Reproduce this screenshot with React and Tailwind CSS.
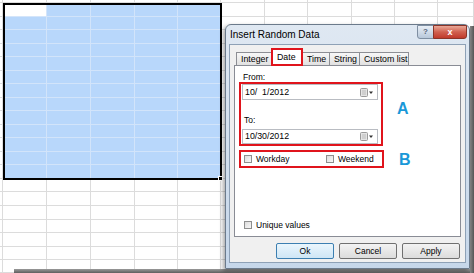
import React from 'react';

const colW = ['w-[3px]', 'w-[44px]', 'w-[44px]', 'w-[44px]', 'w-[43px]', 'w-[43px]', 'w-[44px]', 'w-[43px]', 'w-[44px]', 'w-[43px]', 'w-[43px]', 'w-[36px]'];
const rowH = ['h-[3px]', 'h-[14px]', 'h-[13px]', 'h-[14px]', 'h-[13px]', 'h-[14px]', 'h-[13px]', 'h-[14px]', 'h-[13px]', 'h-[14px]', 'h-[13px]', 'h-[14px]', 'h-[13px]', 'h-[14px]', 'h-[13px]', 'h-[14px]', 'h-[14px]', 'h-[13px]', 'h-[14px]', 'h-[13px]', 'h-[13px]'];

const cellClass = (r, c) => {
  const selected = r >= 1 && r <= 13 && c >= 1 && c <= 5;
  if (selected && r === 1 && c === 1) return 'bg-white border-[#d4e5fa]';
  if (selected) return 'bg-[#b8d7fb] border-[#d2e4fa]';
  return 'bg-white border-[#dcdcdc]';
};

const Sheet = () => (
  <div className="flex flex-col">
    {rowH.map((h, r) => (
      <div key={r} className={`flex ${h}`}>
        {colW.map((w, c) => (
          <div key={c} className={`${w} shrink-0 border-r border-b ${cellClass(r, c)}`} />
        ))}
      </div>
    ))}
  </div>
);

const CalendarPicker = () => (
  <svg width="13" height="9" viewBox="0 0 13 9" className="shrink-0">
    <rect x="0.5" y="0.5" width="7" height="8" rx="1" fill="#e4e4e4" stroke="#9a9a9a" />
    <rect x="2" y="2" width="4" height="5" fill="#cfcfcf" />
    <path d="M9 3.5h4l-2 2.5z" fill="#333" />
  </svg>
);

const DateInput = ({ value, h }) => (
  <div className={`flex ${h} items-center border border-[#b9bcc2] bg-white pl-[2px] pr-[4px]`}>
    <span className="flex-1 whitespace-pre text-[8.8px] leading-none text-black">{value}</span>
    <CalendarPicker />
  </div>
);

const Check = ({ label }) => (
  <div className="flex items-center gap-[4px]">
    <div className="h-[8px] w-[8px] border border-[#8e8f8f] bg-gradient-to-br from-[#dcdcdc] to-[#f8f8f8]" />
    <span className="text-[8.5px] leading-none text-black">{label}</span>
  </div>
);

const Tab = ({ label, w }) => (
  <div className={`${w} -ml-px flex h-[13px] items-center whitespace-nowrap border border-b-0 border-[#8c8e94] bg-gradient-to-b from-[#f7f7f7] to-[#e1e1e1] pl-[4px] text-[8.8px] leading-none text-black first:ml-0`}>
    {label}
  </div>
);

const Button = ({ label, primary }) => (
  <div
    className={`flex h-[16px] w-[58px] items-center justify-center rounded-[2px] border text-[8.5px] leading-none text-black ${
      primary
        ? 'border-[#3c7fb1] bg-gradient-to-b from-[#eaf6fd] to-[#cfe6f5]'
        : 'border-[#707070] bg-gradient-to-b from-[#f3f3f3] to-[#dcdcdc]'
    }`}
  >
    {label}
  </div>
);

export default function App() {
  return (
    <div className="relative h-[273px] w-[474px] overflow-hidden bg-white font-['Liberation_Sans',Arial,sans-serif]">
      <Sheet />

      {/* selection outline */}
      <div className="absolute left-[3px] top-[3px] h-[177px] w-[219px] border-2 border-black" />
      <div className="absolute left-[218px] top-[176px] h-[5px] w-[5px] border border-white bg-black" />

      {/* screenshot drop shadow */}
      <div className="absolute left-[14px] top-[269px] h-[4px] w-[460px] bg-gradient-to-b from-[#9a9a9a] to-[#5f5f5f]" />
      <div className="absolute left-[470px] top-[26px] h-[247px] w-[4px] bg-gradient-to-r from-[#8a8a8a] to-[#555]" />

      {/* dialog */}
      <div className="absolute left-[225px] top-[24px] flex h-[245px] w-[245px] flex-col rounded-t-[6px] border border-[#6b7a8b] bg-gradient-to-b from-[#dfe8f2] to-[#c6d7ea] shadow-[-2px_2px_4px_rgba(0,0,0,0.35)]">
        <div className="flex h-[19px] items-start">
          <span className="pl-[4px] pt-[5px] text-[10px] leading-[10px] text-black">Insert Random Data</span>
          <div className="ml-auto mr-[2px] flex">
            <div className="flex h-[14px] w-[17px] items-center justify-center rounded-bl-[3px] border border-[#7f8fa2] bg-gradient-to-b from-[#e9eff6] to-[#b8c8da] text-[8px] font-bold leading-none text-[#56667a]">
              ?
            </div>
            <div className="-ml-px flex h-[14px] w-[34px] items-center justify-center rounded-br-[3px] border border-[#8a3428] bg-gradient-to-b from-[#e9a898] via-[#d0604f] to-[#c0392b] text-[9px] font-bold leading-none text-white">
              x
            </div>
          </div>
        </div>

        <div className="mx-[3px] mb-[5px] flex flex-1 flex-col border border-[#8ea1b6] bg-[#f0f0f0]">
          <div className="flex h-[20px] items-end pl-[6px]">
            <Tab label="Integer" w="w-[36px]" />
            <div className="relative z-10 -mb-px -ml-px flex h-[18px] w-[32px] items-start border-2 border-[#e0141c] bg-white pl-[4px] pt-[3px] text-[8.8px] leading-none text-black">
              Date
            </div>
            <Tab label="Time" w="w-[28px]" />
            <Tab label="String" w="w-[31px]" />
            <Tab label="Custom list" w="w-[50px]" />
          </div>

          <div className="mx-[4px] flex h-[172px] flex-col border border-[#898c95] bg-white">
            <div className="pl-[8px] pt-[6px] text-[8.5px] leading-[10px] text-black">From:</div>
            <div className="flex items-start">
              <div className="ml-[4px] flex h-[64px] w-[144px] flex-col border-2 border-[#e0141c] pl-[1px] pr-[3px]">
                <DateInput value="10/  1/2012" h="h-[16px]" />
                <div className="flex h-[29px] items-end pb-[5px] pl-[2px] text-[8.5px] leading-none text-black">To:</div>
                <DateInput value="10/30/2012" h="h-[15px]" />
              </div>
              <span className="ml-[14px] mt-[19px] text-[16px] font-bold leading-none text-[#1a98d8]">A</span>
            </div>
            <div className="mt-[4px] flex items-start">
              <div className="ml-[4px] flex h-[18px] w-[145px] items-center border-2 border-[#e0141c] pl-[3px]">
                <div className="w-[82px]">
                  <Check label="Workday" />
                </div>
                <Check label="Weekend" />
              </div>
              <span className="ml-[15px] mt-[2px] text-[16px] font-bold leading-none text-[#1a98d8]">B</span>
            </div>
            <div className="flex-1" />
            <div className="mb-[7px] pl-[9px]">
              <Check label="Unique values" />
            </div>
          </div>

          <div className="mt-[6px] flex justify-end gap-[5px] pr-[5px]">
            <Button label="Ok" primary />
            <Button label="Cancel" />
            <Button label="Apply" />
          </div>
        </div>
      </div>
    </div>
  );
}
